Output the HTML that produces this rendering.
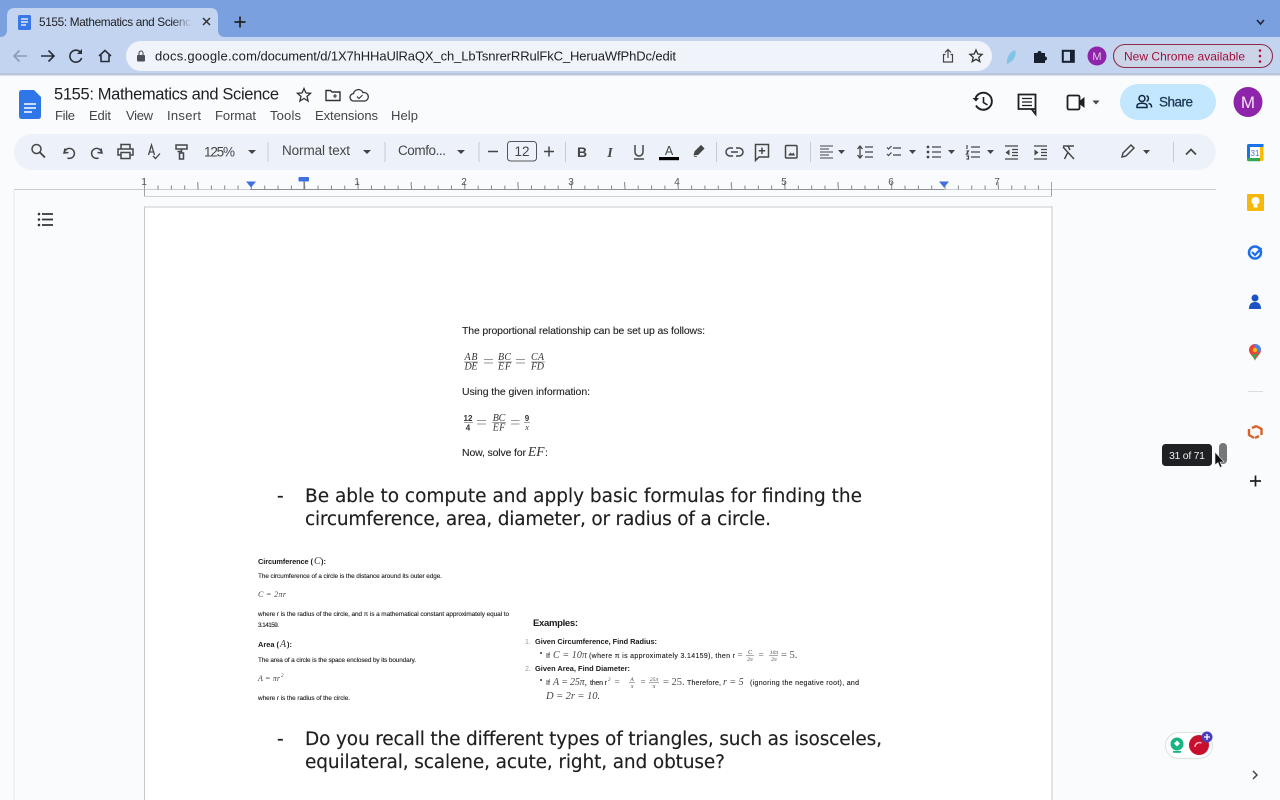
<!DOCTYPE html>
<html><head><meta charset="utf-8"><title>5155: Mathematics and Science</title>
<style>
html,body{margin:0;padding:0;width:1280px;height:800px;overflow:hidden;background:#f9fbfd}
svg{display:block;position:absolute;left:0;top:0;filter:blur(.3px)}
text{font-family:"Liberation Sans",sans-serif;fill:#202124}
.m{font-family:"Liberation Serif",serif;font-style:italic}
.h{font-family:"DejaVu Sans",sans-serif;font-size:18.5px;fill:#1f1f1f;stroke:#1f1f1f;stroke-width:.15px}
.d{font-size:10.5px;fill:#222;stroke:#222;stroke-width:.1px}
.s{font-size:6.4px;fill:#222;stroke:#222;stroke-width:.12px}
.b{font-size:7.4px;font-weight:bold;fill:#1a1a1a}
.r{font-size:10px;fill:#555}
.i{fill:none;stroke:#444746;stroke-width:1.5}
.k{fill:none;stroke:#1f1f1f;stroke-width:1.6}
.mn{font-size:13px;fill:#444}
.tb{font-size:13.5px;fill:#444746}
</style></head><body>
<svg width="1280" height="800" viewBox="0 0 1280 800" xmlns="http://www.w3.org/2000/svg">
<defs><linearGradient id="f"><stop offset="0" stop-color="#c3d4f0" stop-opacity="0"/><stop offset="1" stop-color="#c3d4f0"/></linearGradient></defs>

<!-- Browser chrome -->
<rect width="1280" height="45" fill="#7ba0e0"/>
<rect y="37" width="1280" height="38" fill="#c3d4f0"/>
<rect y="73" width="1280" height="2.5" fill="#b9c5dc"/>
<path d="M0 37C5 37 7 34 7 30V16Q7 8 15 8H210Q218 8 218 16V30C218 34 220 37 225 37Z" fill="#c3d4f0"/>
<rect x="18" y="15" width="13" height="15" rx="1.5" fill="#3b78e7"/>
<path d="M21 19h7M21 22h7M21 25h5" stroke="#fff" stroke-width="1.2"/>
<text x="39" y="26" font-size="11.8" fill="#3c4043" textLength="152">5155: Mathematics and Scienc</text>
<rect x="172" y="12" width="20" height="20" fill="url(#f)"/>
<path d="M203 18l7 7M210 18l-7 7" stroke="#333" stroke-width="1.5"/>
<path d="M240 16.500v11M234.500 22h11" stroke="#222" stroke-width="1.7"/>
<path d="M1257 20l3.500 4 3.500-4" fill="none" stroke="#223" stroke-width="1.6"/>

<path d="M27 56H14M19.500 50.500L14 56l5.500 5.500" fill="none" stroke="#8a9ab8" stroke-width="1.6"/>
<path d="M41 56H54M48.500 50.500L54 56l-5.500 5.500" fill="none" stroke="#2a2f3a" stroke-width="1.6"/>
<path d="M81 53a6 6 0 1 0 .6 5" fill="none" stroke="#2a2f3a" stroke-width="1.6"/><path d="M82 49v5h-5z" fill="#2a2f3a"/>
<path d="M99 56l6-5.500 6 5.500M101 55v6.500h8V55" fill="none" stroke="#2a2f3a" stroke-width="1.6"/>

<rect x="126" y="41" width="866" height="30" rx="15" fill="#f0f4fa"/>
<rect x="137" y="55" width="8" height="6.500" rx="1" fill="#4a4f5a"/><path d="M139 55v-2a2 2 0 0 1 4 0v2" fill="none" stroke="#4a4f5a" stroke-width="1.100"/>
<text x="155" y="60.500" font-size="13" fill="#1f2329" textLength="102">docs.google.com</text>
<text x="257" y="60.500" font-size="13" fill="#5b5f66" textLength="419">/document/d/1X7hHHaUlRaQX_ch_LbTsnrerRRulFkC_HeruaWfPhDc/edit</text>
<path d="M948 50v8M945 52.500l3-3 3 3M945.500 54.500H943.500v7.500h9v-7.500h-2" fill="none" stroke="#444" stroke-width="1.200"/>
<path d="M976 50l1.800 4 4.300.4-3.300 2.900 1 4.300-3.800-2.300-3.800 2.300 1-4.300-3.300-2.900 4.300-.4z" fill="none" stroke="#333" stroke-width="1.300"/>
<path d="M1007 64c-1-5 2-12 8-14 2 5-1 11-8 14z" fill="#7fc4e6"/>
<path d="M1034 53h3.500a2 2 0 0 1 4 0H1045v3.500a2 2 0 0 1 0 4V63h-11z" fill="#17202e"/>
<rect x="1062.800" y="50.800" width="11" height="11" fill="none" stroke="#17202e" stroke-width="2"/><rect x="1070" y="50.800" width="3.800" height="11" fill="#17202e"/>
<circle cx="1097" cy="56" r="9.500" fill="#8e24aa"/><text x="1097" y="60" font-size="11" text-anchor="middle" style="fill:#e6c6ee">M</text>
<rect x="1113.500" y="44.500" width="159" height="23" rx="11.500" fill="#ccd5e8" stroke="#8f2a4e" stroke-width="1.100"/>
<text x="1124" y="60.500" font-size="12" style="fill:#a3103c" textLength="121">New Chrome available</text>
<circle cx="1260" cy="50.500" r="1.300" fill="#a3103c"/><circle cx="1260" cy="56" r="1.300" fill="#a3103c"/><circle cx="1260" cy="61.500" r="1.300" fill="#a3103c"/>

<!-- Docs header -->
<path d="M19 93q0-3 3-3H34l7 7v19q0 3-3 3H22q-3 0-3-3z" fill="#2f76e8"/>
<path d="M24 104h12M24 108h12M24 112h8" stroke="#fff" stroke-width="1.500"/>
<text x="54" y="99.500" font-size="16.500" textLength="225" style="fill:#1f1f1f">5155: Mathematics and Science</text>
<path d="M304 88.500l1.900 4.400 4.700.4-3.600 3.100 1.100 4.600-4.100-2.500-4.100 2.500 1.100-4.600-3.600-3.100 4.700-.4z" fill="none" stroke="#333" stroke-width="1.300"/>
<path d="M326 90.500h4.500l1.500 1.500h8v8.500h-14z" fill="none" stroke="#333" stroke-width="1.400"/><path d="M333 96h4M335 94v4" stroke="#333" stroke-width="1.100"/>
<path d="M358 101h-4a3.700 3.700 0 0 1-.5-7.400 5 5 0 0 1 9.500-1 4.300 4.300 0 0 1 2 8.400z" fill="none" stroke="#333" stroke-width="1.300"/><path d="M357 96.500l2 2 3.500-3.500" fill="none" stroke="#333" stroke-width="1.100"/>
<text x="55" y="120" class="mn" textLength="20">File</text>
<text x="89" y="120" class="mn" textLength="22">Edit</text>
<text x="126" y="120" class="mn" textLength="27">View</text>
<text x="167" y="120" class="mn" textLength="34">Insert</text>
<text x="215" y="120" class="mn" textLength="41">Format</text>
<text x="270" y="120" class="mn" textLength="31">Tools</text>
<text x="315" y="120" class="mn" textLength="63">Extensions</text>
<text x="391" y="120" class="mn" textLength="27">Help</text>

<path d="M975.500 98a8.500 8.500 0 1 1 .5 7.500" class="k" style="stroke-width:1.900"/><path d="M972.500 98l3.500 3.500L979 98z" fill="#1f1f1f"/><path d="M983.500 97v5.500l4 2.500" class="k"/>
<path d="M1018.500 94.500h17v14.500h-17zM1035.500 109v5l-4-5" class="k" style="stroke-width:1.800"/><path d="M1022 98.500h10M1022 102h10M1022 105.500h10" stroke="#1f1f1f" stroke-width="1.300"/>
<rect x="1067.500" y="95.500" width="12" height="14" rx="1.500" class="k" style="stroke-width:1.800"/><path d="M1079.500 101l5-4v11l-5-4z" fill="#1f1f1f"/>
<path d="M1092.500 100.500h7l-3.500 4z" fill="#444"/>
<rect x="1120" y="84" width="96" height="36" rx="18" fill="#c2e7ff"/>
<circle cx="1142" cy="98.500" r="3" fill="none" stroke="#12263f" stroke-width="1.500"/><path d="M1137 107.500v-1.500q0-2.800 5-2.800t5 2.800v1.500zM1146.500 95.700a3 3 0 0 1 0 5.600M1148.500 103.500q3 .5 3 3v1" fill="none" stroke="#12263f" stroke-width="1.500"/>
<text x="1159" y="106.500" font-size="13.500" textLength="34" style="fill:#1f3a52;stroke:#1f3a52;stroke-width:.3px">Share</text>
<ellipse cx="1248" cy="102" rx="14.500" ry="15" fill="#8e24aa"/><text x="1248" y="108" font-size="17" text-anchor="middle" style="fill:#f3e3f6">M</text>

<!-- Toolbar -->
<rect x="14" y="134" width="1202" height="36" rx="18" fill="#edf2fa"/>
<circle cx="36.500" cy="149" r="4.500" class="i"/><path d="M40 152.500l5 5" class="i" style="stroke-width:1.900"/>
<path d="M65 148.500l-1 4.500 4.500-.5M64.500 152.500a5 5 0 1 1 3 5.500" class="i"/>
<path d="M101 148.500l1 4.500-4.500-.5M101.500 152.500a5 5 0 1 0-3 5.500" class="i"/>
<path d="M121 149v-4.500h9v4.500M121 155h-3v-6h15v6h-3M121 152.500h9v6h-9z" class="i"/>
<path d="M148.500 155l3-10 3 10M149.500 152h4M153 156l2.500 2.500 4.500-5" class="i" style="stroke-width:1.300"/>
<path d="M176 145h11v4h-11zM181.500 149v2.500h-4M181.500 151.500v2" class="i"/><rect x="179.500" y="153" width="4" height="6" class="i"/>
<text x="204" y="156.500" class="tb" textLength="31">125%</text>
<path d="M248 150h8l-4 4z" fill="#444"/>
<rect x="267.500" y="142" width="1" height="20" fill="#c7ccd4"/>
<text x="282" y="155" class="tb" textLength="68">Normal text</text>
<path d="M363 150h8l-4 4z" fill="#444"/>
<rect x="384.500" y="142" width="1" height="20" fill="#c7ccd4"/>
<text x="398" y="155" class="tb" textLength="48">Comfo...</text>
<path d="M457 150h8l-4 4z" fill="#444"/>
<rect x="478.500" y="142" width="1" height="20" fill="#c7ccd4"/>
<path d="M488 151.500h10" class="i"/>
<rect x="507.500" y="141.500" width="29" height="19.500" rx="3" fill="none" stroke="#555" stroke-width="1"/>
<text x="522" y="156" class="tb" text-anchor="middle">12</text>
<path d="M544 151.500h10M549 146.500v10" class="i"/>
<rect x="565" y="142" width="1" height="20" fill="#c7ccd4"/>
<text x="582" y="157" font-size="14" font-weight="bold" text-anchor="middle" style="fill:#444746">B</text>
<text x="610" y="157" font-size="14" font-weight="bold" font-style="italic" text-anchor="middle" style="fill:#444746;font-family:'Liberation Serif',serif">I</text>
<path d="M635 145v7a4 4 0 0 0 8 0v-7M634 159h10" class="i"/>
<text x="669" y="155" font-size="12.500" text-anchor="middle" style="fill:#444746">A</text><rect x="659" y="157" width="20" height="3.200" fill="#000"/>
<path d="M694 155l1-3.500 6-6 3 3-6 6zM694 156.500h3" fill="#444746" stroke="#444746" stroke-width=".8"/>
<rect x="716" y="142" width="1" height="20" fill="#c7ccd4"/>
<path d="M733 148h-3a4 4 0 0 0 0 8h3M736 148h3a4 4 0 0 1 0 8h-3M731 152h7" class="i"/>
<path d="M755.500 144.500h13v12.500h-9.500l-3.500 3.500zM762 147.500v6.500M758.800 150.700h6.400" class="i"/>
<rect x="785.500" y="145.500" width="11.500" height="12.500" rx="1" class="i"/><path d="M788 155.500l2.500-3 1.500 1.500 1.500-1.500 1.500 3z" fill="#444746"/>
<rect x="810" y="142" width="1" height="20" fill="#c7ccd4"/>
<path d="M820 146h13M820 149h9M820 152h13M820 155h9M820 158h13" stroke="#444746" stroke-width="1.100"/>
<path d="M838 150h7l-3.500 4z" fill="#444"/>
<path d="M860 147v10M857.500 149l2.500-3 2.500 3M857.500 155l2.500 3 2.500-3M865 147h8M865 152h8M865 157h8" class="i" style="stroke-width:1.300"/>
<path d="M887 147.500l1.500 1.500 3-3M887 154l1.500 1.500 3-3M893 148h8M893 155h8" class="i" style="stroke-width:1.200"/>
<path d="M909 150h7l-3.500 4z" fill="#444"/>
<circle cx="928" cy="147" r="1.400" fill="#444746"/><circle cx="928" cy="152" r="1.400" fill="#444746"/><circle cx="928" cy="157" r="1.400" fill="#444746"/><path d="M932 147h9M932 152h9M932 157h9" class="i" style="stroke-width:1.300"/>
<path d="M948 150h7l-3.500 4z" fill="#444"/>
<path d="M967 145v4M966.500 151h2l-2 3h2M966.500 156h2v3h-2M971 147h9M971 152h9M971 157h9" class="i" style="stroke-width:1.200"/>
<path d="M987 150h7l-3.500 4z" fill="#444"/>
<path d="M1005 146h13M1012 149.500h6M1012 152.500h6M1012 155.500h6M1005 159h13" class="i" style="stroke-width:1.200"/><path d="M1009.500 149.500v6l-4-3z" fill="#444746"/>
<path d="M1034 146h13M1041 149.500h6M1041 152.500h6M1041 155.500h6M1034 159h13" class="i" style="stroke-width:1.200"/><path d="M1034.500 149.500v6l4-3z" fill="#444746"/>
<path d="M1063 146h11M1068 146l2 4M1063 147l11 12" class="i"/><path d="M1068 152l-3.500 7" class="i"/>
<path d="M1122 157l1-4 8-8 3 3-8 8z" class="i"/>
<path d="M1143 150h7l-3.500 4z" fill="#444"/>
<rect x="1173" y="142" width="1" height="20" fill="#c7ccd4"/>
<path d="M1186 154.500l5-5 5 5" class="i" style="stroke-width:1.700"/>

<!-- Ruler -->
<path d="M14 189.500H1216" stroke="#c9ccd0" stroke-width="1"/>
<path d="M250 189.500H944" stroke="#8d9096" stroke-width="1"/>
<path d="M144 196.500H1052" stroke="#cfd2d6" stroke-width="1"/>
<path d="M144.500 178V196M1051.500 182V196" stroke="#a0a3a8" stroke-width="1"/>
<line x1="157.500" y1="187.500" x2="1050" y2="187.500" stroke="#85888d" stroke-width="4" stroke-dasharray="1 12.340"/>
<line x1="197.300" y1="184" x2="1050" y2="184" stroke="#85888d" stroke-width="4" stroke-dasharray="1 52.350"/>
<g font-size="10" text-anchor="middle">
<text x="144" y="185" class="r">1</text><text x="357" y="185" class="r">1</text><text x="464" y="185" class="r">2</text><text x="571" y="185" class="r">3</text><text x="677" y="185" class="r">4</text><text x="784" y="185" class="r">5</text><text x="891" y="185" class="r">6</text><text x="997" y="185" class="r">7</text>
</g>
<path d="M246 181.500h10l-5 6z" fill="#3f6fe0"/><path d="M939 181.500h10l-5 6z" fill="#3f6fe0"/>
<rect x="298.500" y="177" width="10.500" height="4.500" rx="1" fill="#3f6fe0"/><path d="M304 181.500V189" stroke="#777"/>

<!-- Left rail -->
<path d="M14 190V800" stroke="#d8dadd" stroke-width="1" opacity=".6"/>
<circle cx="39" cy="214" r="1.300" fill="#333"/><circle cx="39" cy="219.500" r="1.300" fill="#333"/><circle cx="39" cy="225" r="1.300" fill="#333"/>
<path d="M42 214h11M42 219.500h11M42 225h11" stroke="#333" stroke-width="1.700"/>

<!-- Page -->
<rect x="144.500" y="207" width="907.500" height="600" fill="#fff" stroke="#c7c9cc" stroke-width="1"/>

<text x="462" y="334" class="d" textLength="243">The proportional relationship can be set up as follows:</text>
<g text-anchor="middle">
<text x="471" y="360" class="m" font-size="10" style="fill:#333" textLength="13">AB</text><text x="471" y="369.500" class="m" font-size="10" style="fill:#333" textLength="13">DE</text>
<text x="504.500" y="360" class="m" font-size="10" style="fill:#333" textLength="13">BC</text><text x="504.500" y="369.500" class="m" font-size="10" style="fill:#333" textLength="13">EF</text>
<text x="537.500" y="360" class="m" font-size="10" style="fill:#333" textLength="13">CA</text><text x="537.500" y="369.500" class="m" font-size="10" style="fill:#333" textLength="13">FD</text>
<text x="468" y="421" font-size="8" font-weight="bold" style="fill:#333">12</text><text x="468" y="430.500" font-size="8" font-weight="bold" style="fill:#333">4</text>
<text x="499" y="421" class="m" font-size="10" style="fill:#333" textLength="12.500">BC</text><text x="499" y="430.500" class="m" font-size="10" style="fill:#333" textLength="12.500">EF</text>
<text x="527" y="421" font-size="8" font-weight="bold" style="fill:#333">9</text><text x="527" y="430" class="m" font-size="8" style="fill:#333">x</text>
</g>
<path d="M464 362h14M498 362h14M531 362h14M464 422.500h9M492 422.500h14M524 422.500h6" stroke="#444" stroke-width=".6"/>
<path d="M484 359.500h9M484 363h9M516 359.500h9M516 363h9M477 420.500h9M477 424h9M511 420.500h8.500M511 424h8.500" stroke="#777" stroke-width=".8"/>
<text x="462" y="395" class="d" textLength="128">Using the given information:</text>
<text x="462" y="456" class="d" textLength="64">Now, solve for</text>
<text x="528" y="456" class="m" font-size="13.500" style="fill:#333">EF</text><text x="545" y="456" class="d">:</text>

<text x="277" y="502" class="h">-</text>
<text x="305" y="502" class="h" textLength="557">Be able to compute and apply basic formulas for finding the</text>
<text x="305" y="525" class="h" textLength="466">circumference, area, diameter, or radius of a circle.</text>

<text x="258" y="564" class="b" textLength="55">Circumference (</text><text x="314" y="564" class="m" font-size="10" style="fill:#333">C</text><text x="321" y="564" class="b">):</text>
<text x="258" y="578" class="s" textLength="184">The circumference of a circle is the distance around its outer edge.</text>
<text x="258" y="597" class="m" font-size="8" style="fill:#444" textLength="28">C = 2πr</text>
<text x="258" y="616" class="s" textLength="251">where r is the radius of the circle, and π is a mathematical constant approximately equal to</text>
<text x="258" y="627" class="s" textLength="21">3.14159.</text>
<text x="258" y="647" class="b" textLength="21">Area (</text><text x="280" y="647" class="m" font-size="10" style="fill:#333">A</text><text x="287" y="647" class="b">):</text>
<text x="258" y="662" class="s" textLength="158">The area of a circle is the space enclosed by its boundary.</text>
<text x="258" y="681" class="m" font-size="8" style="fill:#444" textLength="22">A = πr</text><text x="281" y="677" class="m" font-size="5" style="fill:#444">2</text>
<text x="258" y="700" class="s" textLength="92">where r is the radius of the circle.</text>

<text x="533" y="626" font-size="9.500" font-weight="bold" textLength="45" style="fill:#1a1a1a">Examples:</text>
<text x="525" y="644" font-size="7" style="fill:#999">1.</text>
<text x="535" y="644" class="b" textLength="122">Given Circumference, Find Radius:</text>
<circle cx="541" cy="653" r="1" fill="#333"/>
<text x="546" y="658" class="s" style="font-size:7px">If</text>
<text x="553" y="658" class="m" font-size="10" style="fill:#444" textLength="34">C = 10π</text>
<text x="589" y="658" class="s" textLength="146" style="font-size:7px">(where π is approximately 3.14159), then r</text>
<text x="737" y="658" class="m" font-size="9" style="fill:#555">=</text>
<text x="750" y="654" class="m" font-size="6" text-anchor="middle" style="fill:#444">C</text><text x="750" y="661" class="m" font-size="5.500" text-anchor="middle" style="fill:#444">2π</text>
<path d="M746 655.500h8M769 655.500h9" stroke="#555" stroke-width=".5"/>
<text x="758" y="658" class="m" font-size="9" style="fill:#555">=</text>
<text x="774" y="654" class="m" font-size="5.500" text-anchor="middle" style="fill:#444">10π</text><text x="774" y="661" class="m" font-size="5.500" text-anchor="middle" style="fill:#444">2π</text>
<text x="781" y="658" class="m" font-size="10.500" style="fill:#555;font-style:normal">= 5.</text>
<text x="525" y="671" font-size="7" style="fill:#999">2.</text>
<text x="535" y="671" class="b" textLength="95">Given Area, Find Diameter:</text>
<circle cx="541" cy="680" r="1" fill="#333"/>
<text x="546" y="685" class="s" style="font-size:7px">If</text>
<text x="553" y="685" class="m" font-size="10" style="fill:#444" textLength="34">A = 25π,</text>
<text x="590" y="685" class="s" style="font-size:7px" textLength="17">then r</text>
<text x="608" y="681" class="m" font-size="5" style="fill:#444">2</text>
<text x="614" y="685" class="m" font-size="9" style="fill:#555">=</text>
<text x="632" y="681" class="m" font-size="5.500" text-anchor="middle" style="fill:#444">A</text><text x="632" y="688" class="m" font-size="5.500" text-anchor="middle" style="fill:#444">π</text>
<text x="640" y="685" class="m" font-size="9" style="fill:#555">=</text>
<text x="654" y="681" class="m" font-size="5.500" text-anchor="middle" style="fill:#444">25π</text><text x="654" y="688" class="m" font-size="5.500" text-anchor="middle" style="fill:#444">π</text>
<path d="M629 682.500h6M649 682.500h10" stroke="#555" stroke-width=".5"/>
<text x="663" y="685" class="m" font-size="10.500" style="fill:#555;font-style:normal">= 25.</text>
<text x="687" y="685" class="s" style="font-size:7px" textLength="34">Therefore,</text>
<text x="723" y="685" class="m" font-size="10" style="fill:#444">r = 5</text>
<text x="750" y="685" class="s" style="font-size:7px" textLength="109">(ignoring the negative root), and</text>
<text x="546" y="699" class="m" font-size="10.500" style="fill:#444" textLength="54">D = 2r = 10.</text>

<text x="277" y="745" class="h">-</text>
<text x="305" y="745" class="h" textLength="577">Do you recall the different types of triangles, such as isosceles,</text>
<text x="305" y="768" class="h" textLength="420">equilateral, scalene, acute, right, and obtuse?</text>

<!-- Side panel -->
<rect x="1247" y="144" width="16.500" height="17" rx="1.500" fill="#fbbc04"/>
<path d="M1247 146q0-2 2-2h14.500v3h-16.500z" fill="#1a73e8"/><path d="M1247 147h3v14h-1.500q-1.500 0-1.500-1.500z" fill="#1a73e8"/><path d="M1247 158h13v3.300h-11q-2 0-2-2z" fill="#34a853"/>
<rect x="1250" y="147" width="10" height="11" fill="#fff"/><text x="1255" y="156" font-size="8" text-anchor="middle" style="fill:#4a6fd0">31</text>
<rect x="1247" y="194" width="17" height="17" rx="1" fill="#f6b80b"/><circle cx="1255.500" cy="201" r="4" fill="#fff"/><rect x="1253.500" y="205" width="4" height="2.500" fill="#fff"/>
<circle cx="1255" cy="252.500" r="6" fill="none" stroke="#1f6ee8" stroke-width="2.500"/><path d="M1252 252l3 3 6.500-7" fill="none" stroke="#1f6ee8" stroke-width="2.200"/>
<circle cx="1255" cy="298" r="3.500" fill="#1a52c4"/><path d="M1249 309q0-7 6-7t6 7z" fill="#1a52c4"/>
<path d="M1255 344a6 6 0 0 1 6 6c0 4-4 6-6 10.500-2-4.500-6-6.500-6-10.500a6 6 0 0 1 6-6z" fill="#ea4335"/>
<path d="M1255 344a6 6 0 0 1 6 6l-3 3-4-8z" fill="#4285f4"/><path d="M1258 353c-1.500 2-2.500 4-3 7.500-1-2.500-2.500-4-3.500-5.500z" fill="#34a853"/><circle cx="1255" cy="350" r="2.200" fill="#fbbc04"/>
<rect x="1248" y="391" width="15" height="1" fill="#dadce0"/>
<path d="M1256 426l5.500 3v6M1254 438l-5-3v-6M1252 428l4.500-2M1259 436l-4 2" fill="none" stroke="#d9622b" stroke-width="2.400"/>
<path d="M1250 481h11M1255.500 475.500v11" stroke="#1f1f1f" stroke-width="1.700"/>

<!-- Tooltip + scrollbar -->
<rect x="1162" y="444" width="50" height="22" rx="3.500" fill="#202124"/>
<text x="1187" y="459" font-size="10.500" text-anchor="middle" style="fill:#eee" textLength="36">31 of 71</text>
<rect x="1219" y="443" width="8" height="21" rx="4" fill="#75777a"/>
<path d="M1215 452v13l3-2.500 2 5 2-1-2-4.500h4z" fill="#111" stroke="#eee" stroke-width=".6"/>

<!-- Widget -->
<rect x="1165.500" y="732.500" width="47" height="26" rx="13" fill="#fff" stroke="#e2e3e5" stroke-width="1.200"/>
<circle cx="1177" cy="744" r="6.500" fill="#17b583"/><path d="M1177 740.500l3 3-3 3-3-3z" fill="#fff"/><rect x="1173" y="751" width="8" height="1.800" fill="#17b583"/>
<circle cx="1199" cy="745" r="10" fill="#c8102e"/><path d="M1195 747a4.500 4.500 0 0 1 6.500-4" fill="none" stroke="#f4b8c2" stroke-width="1.500"/>
<circle cx="1207" cy="737" r="5.500" fill="#4a3fb8"/><path d="M1204 737h6M1207 734v6" stroke="#fff" stroke-width="1.300"/>
<path d="M1253 771l4 4-4 4" fill="none" stroke="#444" stroke-width="1.500"/>
</svg>
</body></html>
